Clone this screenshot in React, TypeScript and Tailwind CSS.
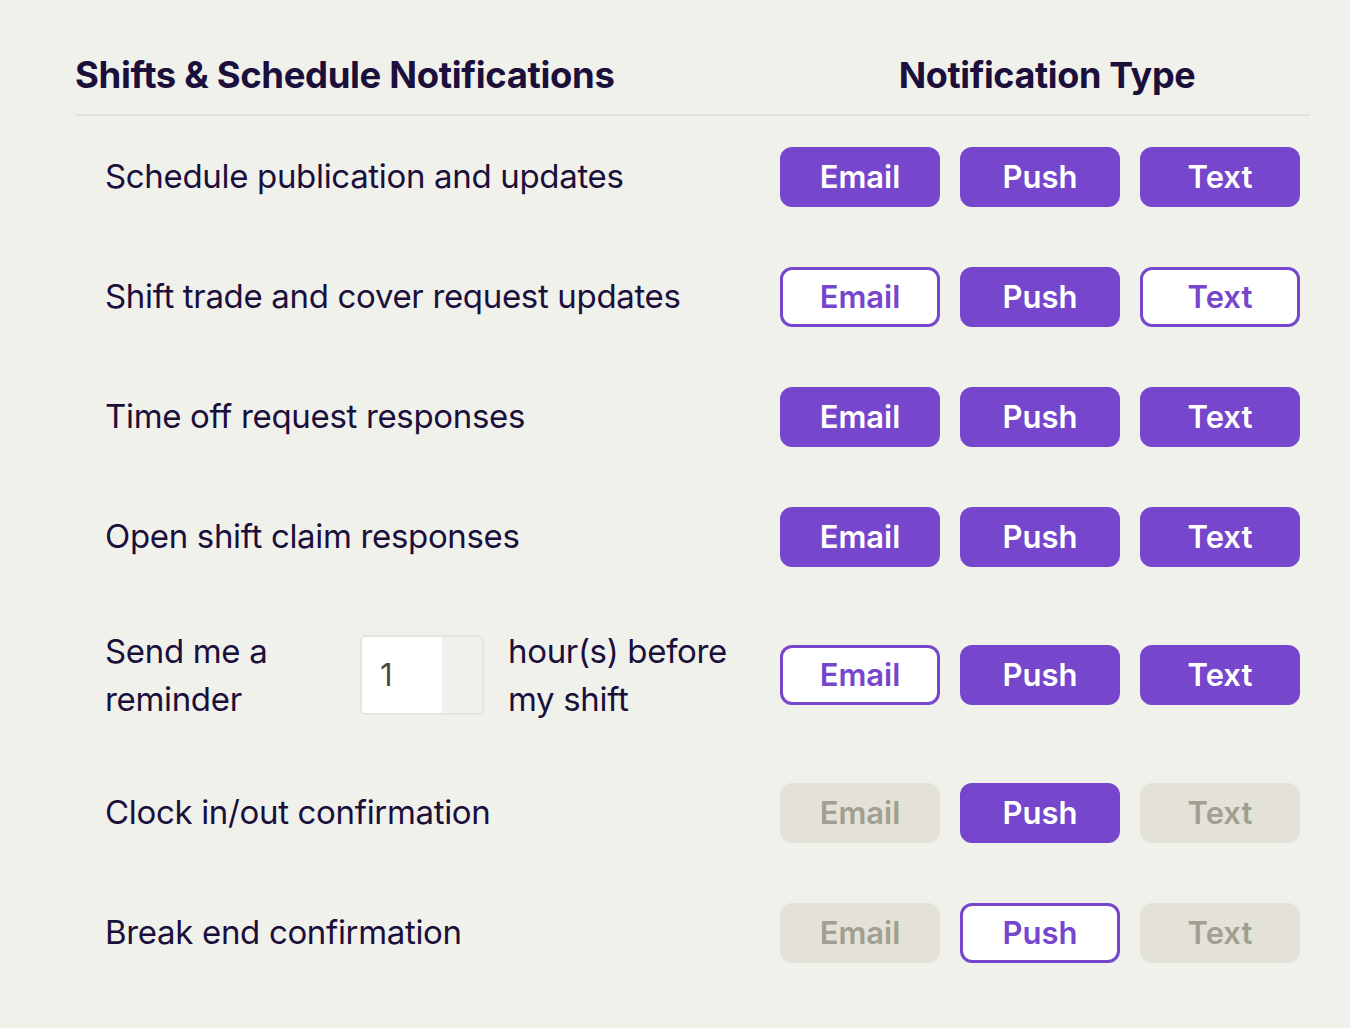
import React from 'react'

type Mode = 'on' | 'off' | 'disabled'

const rows: { label: string; modes: [Mode, Mode, Mode] }[] = [
  { label: 'Schedule publication and updates', modes: ['on', 'on', 'on'] },
  { label: 'Shift trade and cover request updates', modes: ['off', 'on', 'off'] },
  { label: 'Time off request responses', modes: ['on', 'on', 'on'] },
  { label: 'Open shift claim responses', modes: ['on', 'on', 'on'] },
]

const lastRows: { label: string; modes: [Mode, Mode, Mode] }[] = [
  { label: 'Clock in/out confirmation', modes: ['disabled', 'on', 'disabled'] },
  { label: 'Break end confirmation', modes: ['disabled', 'off', 'disabled'] },
]

const names = ['Email', 'Push', 'Text']

function TypeButton({ name, mode }: { name: string; mode: Mode }) {
  const cls =
    mode === 'on'
      ? 'bg-[#7646cc] text-white border-[#7646cc]'
      : mode === 'off'
        ? 'bg-white text-[#7646cc] border-[#7646cc]'
        : 'bg-[#e4e2d8] text-[#a19f91] border-[#e4e2d8]'
  return (
    <button
      className={`w-[160px] h-[60px] rounded-xl border-[3px] text-[31px] font-semibold flex items-center justify-center ${cls}`}
    >
      {name}
    </button>
  )
}

function Buttons({ modes }: { modes: [Mode, Mode, Mode] }) {
  return (
    <div className="flex gap-5">
      {modes.map((m, i) => (
        <TypeButton key={names[i]} name={names[i]} mode={m} />
      ))}
    </div>
  )
}

function Row({ label, modes }: { label: string; modes: [Mode, Mode, Mode] }) {
  return (
    <div className="flex items-center justify-between h-[60px] pl-[30px] pr-[10px]">
      <span className="text-[33px] tracking-[-0.01em]">{label}</span>
      <Buttons modes={modes} />
    </div>
  )
}

export default function App() {
  return (
    <div
      className="min-h-screen bg-[#f1f1ec] text-[#1b0f3b] pl-[75px] pr-[40px] pt-[36px]"
      style={{ fontFamily: 'Inter, "Noto Sans", sans-serif' }}
    >
      <div className="flex items-center justify-between h-[80px] border-b-2 border-[#e6e3da]">
        <h1 className="text-[36.5px] font-bold tracking-[-0.01em] leading-[50px]">
          Shifts &amp; Schedule Notifications
        </h1>
        <h2 className="text-[36px] font-bold tracking-[-0.01em] w-[520px] text-center mr-[3px] leading-[50px]">
          Notification Type
        </h2>
      </div>
      <div className="flex flex-col gap-[60px] pt-[31px]">
        {rows.map((r) => (
          <Row key={r.label} {...r} />
        ))}
        <div className="flex items-center justify-between h-[96px] pl-[30px] pr-[10px]">
          <div className="flex items-center">
            <span className="text-[33px] tracking-[-0.01em] leading-[48px] w-[255px]">Send me a reminder</span>
            <div className="flex w-[124px] h-[80px] border-2 border-[#e6e3da] rounded-md overflow-hidden">
              <div className="w-[80px] bg-white text-[31px] text-[#4a4a40] flex items-center pl-[18px]">1</div>
            </div>
            <span className="text-[33px] tracking-[-0.01em] leading-[48px] w-[250px] pl-[24px]">
              hour(s) before my shift
            </span>
          </div>
          <Buttons modes={['off', 'on', 'on']} />
        </div>
        {lastRows.map((r) => (
          <Row key={r.label} {...r} />
        ))}
      </div>
    </div>
  )
}
